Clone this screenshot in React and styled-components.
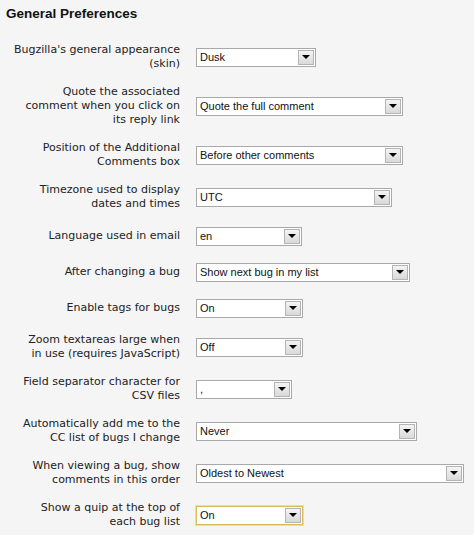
import React from "react";
import styled, { createGlobalStyle } from "styled-components";

const Global = createGlobalStyle`
  html, body { margin: 0; padding: 0; background: #ffffff; }
  body { width: 474px; height: 538px; overflow: hidden; }
`;

const Page = styled.div`
  width: 474px;
  height: 535px;
  background: #f5f5f5;
  box-sizing: border-box;
  padding: 5px 0 0 6px;
`;

const Title = styled.h2`
  margin: 0;
  font-family: "Liberation Sans", Arial, sans-serif;
  font-weight: bold;
  font-size: 13.5px;
  line-height: 17px;
  color: #111;
`;

const Table = styled.div`
  display: grid;
  grid-template-columns: 174px auto;
  column-gap: 16px;
  margin-top: 14px;
  justify-content: start;
`;

const Label = styled.div`
  font-family: "DejaVu Sans", Verdana, sans-serif;
  font-size: 11px;
  line-height: 14px;
  color: #222;
  text-align: right;
  padding: 7px 0;
  min-height: 22px;
  display: flex;
  align-items: center;
  justify-content: flex-end;
`;

const Cell = styled.div`
  display: flex;
  align-items: center;
`;

const Select = styled.div`
  box-sizing: border-box;
  width: ${(p) => p.$w}px;
  height: 19px;
  display: flex;
  align-items: center;
  background: #fff;
  border: 1px solid ${(p) => (p.$focus ? "#dcb95a" : "#a9a9a9")};
  box-shadow: ${(p) => (p.$focus ? "0 0 0 1px #f0dca0" : "none")};
  padding: 1px;
`;

const Value = styled.span`
  flex: 1;
  font-family: "Liberation Sans", Arial, sans-serif;
  font-size: 11px;
  color: #111;
  padding-left: 2px;
  white-space: nowrap;
  overflow: hidden;
`;

const Arrow = styled.span`
  box-sizing: border-box;
  width: 16px;
  height: 15px;
  border: 1px solid #b4b4b4;
  background: linear-gradient(#f4f4f4, #d9d9d9);
  display: flex;
  align-items: center;
  justify-content: center;
  &::after {
    content: "";
    width: 0;
    height: 0;
    border-left: 4px solid transparent;
    border-right: 4px solid transparent;
    border-top: 4px solid #000;
  }
`;

const rows = [
  { label: ["Bugzilla's general appearance", "(skin)"], value: "Dusk", w: 120 },
  { label: ["Quote the associated", "comment when you click on", "its reply link"], value: "Quote the full comment", w: 207 },
  { label: ["Position of the Additional", "Comments box"], value: "Before other comments", w: 207 },
  { label: ["Timezone used to display", "dates and times"], value: "UTC", w: 196 },
  { label: ["Language used in email"], value: "en", w: 106 },
  { label: ["After changing a bug"], value: "Show next bug in my list", w: 214 },
  { label: ["Enable tags for bugs"], value: "On", w: 107 },
  { label: ["Zoom textareas large when", "in use (requires JavaScript)"], value: "Off", w: 107 },
  { label: ["Field separator character for", "CSV files"], value: ",", w: 96 },
  { label: ["Automatically add me to the", "CC list of bugs I change"], value: "Never", w: 221 },
  { label: ["When viewing a bug, show", "comments in this order"], value: "Oldest to Newest", w: 268 },
  { label: ["Show a quip at the top of", "each bug list"], value: "On", w: 107, focus: true },
];

export default function App() {
  return (
    <>
      <Global />
      <Page>
        <Title>General Preferences</Title>
        <Table>
          {rows.map((r, i) => (
            <React.Fragment key={i}>
              <Label>
                <span>
                  {r.label.map((l, j) => (
                    <React.Fragment key={j}>
                      {j > 0 && <br />}
                      {l}
                    </React.Fragment>
                  ))}
                </span>
              </Label>
              <Cell>
                <Select $w={r.w} $focus={r.focus}>
                  <Value>{r.value}</Value>
                  <Arrow />
                </Select>
              </Cell>
            </React.Fragment>
          ))}
        </Table>
      </Page>
    </>
  );
}
